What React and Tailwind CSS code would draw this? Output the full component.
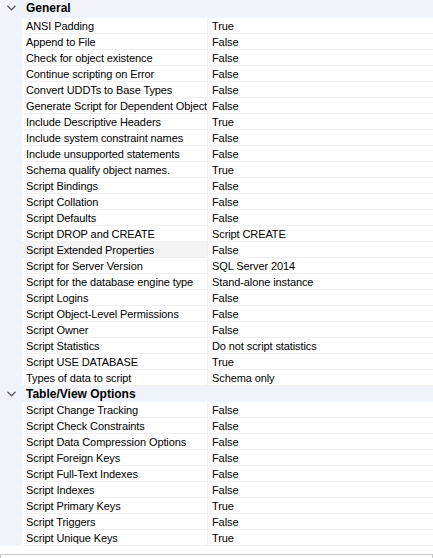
const SECTIONS = [
  {
    title: "General",
    rows: [
      ["ANSI Padding", "True"],
      ["Append to File", "False"],
      ["Check for object existence", "False"],
      ["Continue scripting on Error", "False"],
      ["Convert UDDTs to Base Types", "False"],
      ["Generate Script for Dependent Objects", "False"],
      ["Include Descriptive Headers", "True"],
      ["Include system constraint names", "False"],
      ["Include unsupported statements", "False"],
      ["Schema qualify object names.", "True"],
      ["Script Bindings", "False"],
      ["Script Collation", "False"],
      ["Script Defaults", "False"],
      ["Script DROP and CREATE", "Script CREATE"],
      ["Script Extended Properties", "False", true],
      ["Script for Server Version", "SQL Server 2014"],
      ["Script for the database engine type", "Stand-alone instance"],
      ["Script Logins", "False"],
      ["Script Object-Level Permissions", "False"],
      ["Script Owner", "False"],
      ["Script Statistics", "Do not script statistics"],
      ["Script USE DATABASE", "True"],
      ["Types of data to script", "Schema only"],
    ],
  },
  {
    title: "Table/View Options",
    rows: [
      ["Script Change Tracking", "False"],
      ["Script Check Constraints", "False"],
      ["Script Data Compression Options", "False"],
      ["Script Foreign Keys", "False"],
      ["Script Full-Text Indexes", "False"],
      ["Script Indexes", "False"],
      ["Script Primary Keys", "True"],
      ["Script Triggers", "False"],
      ["Script Unique Keys", "True"],
    ],
  },
];

function Chevron() {
  return (
    <svg width="9" height="6" viewBox="0 0 9 6" className="text-[#5a5a5a]">
      <polyline points="0.5,0.8 4.5,4.8 8.5,0.8" fill="none" stroke="currentColor" strokeWidth="1.3" />
    </svg>
  );
}

export default function App() {
  return (
    <div
      className="w-[433px] h-[558px] overflow-hidden bg-white text-[11px] leading-[15px] tracking-[-0.1px] text-black"
      style={{ fontFamily: '"Liberation Sans", Arial, sans-serif' }}
    >
      {SECTIONS.map((section, i) => (
        <div key={section.title}>
          <div
            className={`flex items-center bg-[#f0f3f9] ${
              i === 0 ? "h-[18px] pb-[2px]" : "h-4"
            }`}
          >
            <div className="flex w-[22px] justify-center pl-[1px]">
              <Chevron />
            </div>
            <div className="pl-1 text-[12px] font-bold tracking-normal">{section.title}</div>
          </div>
          {section.rows.map(([name, value, hover]) => (
            <div key={name} className="flex h-4">
              <div className="w-[22px] shrink-0 bg-[#f0f3f9]" />
              <div
                className={`flex w-[186px] shrink-0 items-center overflow-hidden whitespace-nowrap border-b border-r border-[#f0f0f0] pl-1 pt-[1px] ${
                  hover ? "bg-[#f4f4f4]" : ""
                }`}
              >
                {name}
              </div>
              <div className="flex flex-1 items-center overflow-hidden whitespace-nowrap border-b border-[#f0f0f0] pl-1 pt-[1px]">
                {value}
              </div>
            </div>
          ))}
        </div>
      ))}
      <div className="mt-[8px] h-[10px] border-x border-t border-[#c8c8c8]" />
    </div>
  );
}
